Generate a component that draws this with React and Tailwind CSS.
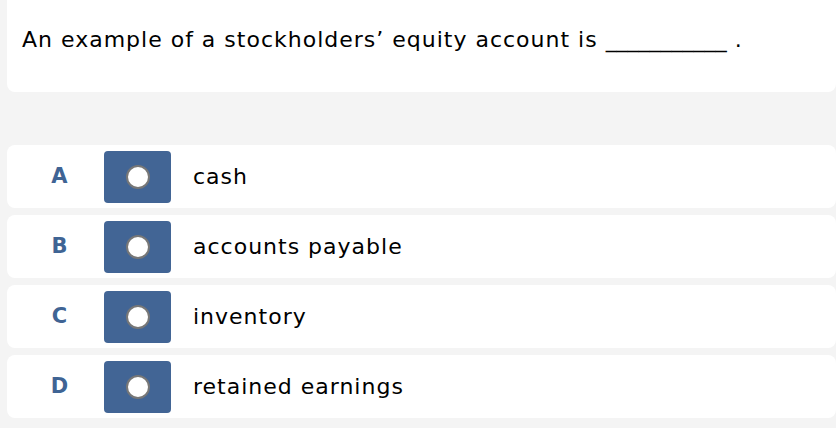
const options = [
  { letter: 'A', text: 'cash' },
  { letter: 'B', text: 'accounts payable' },
  { letter: 'C', text: 'inventory' },
  { letter: 'D', text: 'retained earnings' },
];

export default function App() {
  return (
    <div className="w-[836px] h-[428px] overflow-hidden bg-[#f4f4f4] font-['DejaVu_Sans',Verdana,sans-serif] text-black">
      <div className="ml-[7px] mt-[-10px] h-[102px] rounded-lg bg-white pl-[15px] pt-[36px]">
        <p className="text-[22px] leading-[28px] tracking-[1px]">
          An example of a stockholders’ equity account is{' '}
          <span className="tracking-normal">___________</span> .
        </p>
      </div>
      <div className="mt-[53px] flex flex-col gap-[7px] pl-[7px]">
        {options.map((o) => (
          <div key={o.letter} className="flex h-[63px] items-center rounded-lg bg-white">
            <div className="w-[97px] flex justify-center pl-[8px] text-[21px] font-bold text-[#3f6494]">{o.letter}</div>
            <div className="flex h-[52px] w-[67px] items-center justify-center rounded-[4px] bg-[#426595]">
              <div className="h-6 w-6 rounded-full border-2 border-[#777] bg-white" />
            </div>
            <div className="pl-[22px] text-[22px] tracking-[1px]">{o.text}</div>
          </div>
        ))}
      </div>
    </div>
  );
}
